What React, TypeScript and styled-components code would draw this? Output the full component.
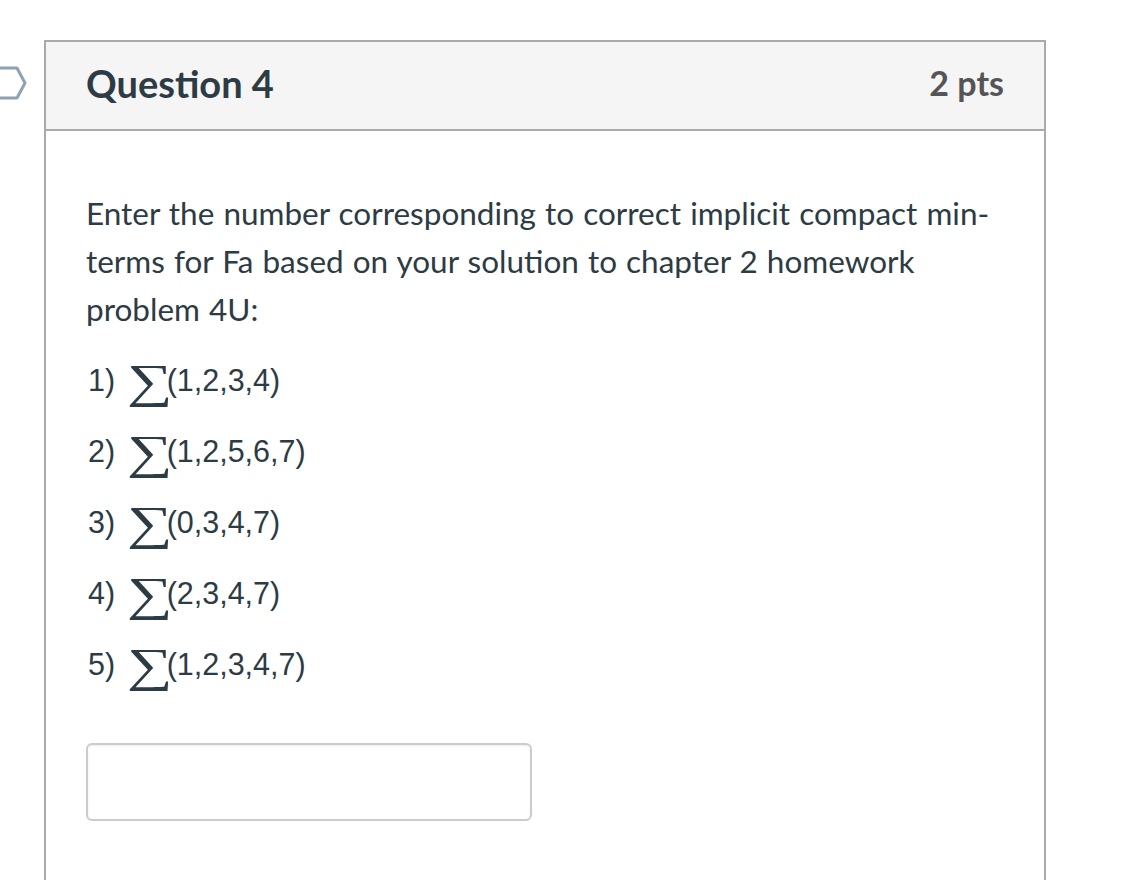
import styled, { createGlobalStyle } from 'styled-components';

const GlobalStyle = createGlobalStyle`
  html, body {
    margin: 0;
    padding: 0;
    background: #ffffff;
  }
  body {
    font-family: Lato, 'Helvetica Neue', Arial, sans-serif;
    color: #2d3b45;
  }
`;

const Page = styled.div`
  position: relative;
  width: 1140px;
  height: 880px;
  overflow: hidden;
  padding: 40px 0 0 44px;
  box-sizing: border-box;
`;

const Marker = styled.svg`
  position: absolute;
  left: 0;
  top: 63px;
`;

const QuestionBox = styled.div`
  width: 1002px;
  border: 2px solid #aaaaaa;
  border-bottom: none;
  box-sizing: border-box;
  min-height: 900px;
`;

const Header = styled.div`
  display: flex;
  justify-content: space-between;
  align-items: center;
  height: 89px;
  padding: 0 40px 6px 40px;
  box-sizing: border-box;
  background: #f5f5f5;
  border-bottom: 2px solid #aaaaaa;
`;

const Title = styled.h2`
  margin: 0;
  font-size: 38px;
  font-weight: 700;
  color: #2d3b45;
`;

const Points = styled.span`
  font-size: 34px;
  font-weight: 700;
  color: #555555;
`;

const Body = styled.div`
  padding: 58px 41px 0 40px;
`;

const Prompt = styled.p`
  margin: 0 0 24px;
  font-size: 31.5px;
  line-height: 48px;
  word-spacing: 1px;
  color: #2d3b45;
`;

const Options = styled.div`
  display: flex;
  flex-direction: column;
  gap: 24px;
`;

const Option = styled.div`
  display: flex;
  align-items: center;
  height: 47px;
  font-family: 'Liberation Sans', Arial, sans-serif;
  font-size: 30.5px;
  color: #2d3b45;
`;

const Num = styled.span`
  width: 39px;
  padding-left: 2px;
`;

const Sigma = styled.span`
  display: inline-block;
  height: 47px;
  line-height: 47px;
  font-family: 'Liberation Serif', 'DejaVu Serif', serif;
  font-size: 64px;
  margin-right: -6px;
  transform: translateY(1px) scaleY(0.74);
`;

const AnswerInput = styled.input`
  display: block;
  margin-top: 55px;
  width: 446px;
  height: 78px;
  box-sizing: border-box;
  border: 2px solid #cccccc;
  border-radius: 6px;
  box-shadow: inset 0 1px 2px rgba(0, 0, 0, 0.08);
  background: #ffffff;
  font-size: 28px;
  padding: 0 14px;
  outline: none;
`;

const options = [
  '(1,2,3,4)',
  '(1,2,5,6,7)',
  '(0,3,4,7)',
  '(2,3,4,7)',
  '(1,2,3,4,7)',
];

function App() {
  return (
    <>
      <GlobalStyle />
      <Page>
        <Marker width="30" height="38" viewBox="0 0 30 38">
          <path
            d="M-4 5 H17 L25 20 L17 35 H-4"
            fill="none"
            stroke="#8ea2b4"
            strokeWidth="3"
            strokeLinejoin="round"
          />
        </Marker>
        <QuestionBox>
          <Header>
            <Title>Question 4</Title>
            <Points>2 pts</Points>
          </Header>
          <Body>
            <Prompt>
              Enter the number corresponding to correct implicit compact min-terms
              for Fa based on your solution to chapter 2 homework problem 4U:
            </Prompt>
            <Options>
              {options.map((o, i) => (
                <Option key={i}>
                  <Num>{i + 1})</Num>
                  <Sigma>∑</Sigma>
                  <span>{o}</span>
                </Option>
              ))}
            </Options>
            <AnswerInput type="text" />
          </Body>
        </QuestionBox>
      </Page>
    </>
  );
}

export default App;
